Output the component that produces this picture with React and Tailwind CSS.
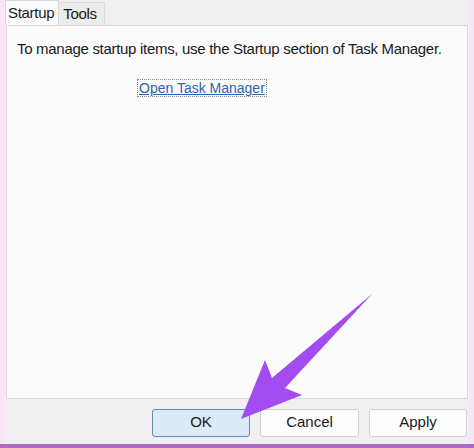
import React from "react";

const FONT = { fontFamily: '"Liberation Sans", Arial, sans-serif' };

function Arrow() {
  return (
    <svg className="absolute left-0 top-0 pointer-events-none" width="474" height="448" viewBox="0 0 474 448">
      <polygon
        points="372,294 272,378 265,360 241,419 302,395 285,388"
        fill="#a34cf2"
        strokeLinejoin="round"
      />
    </svg>
  );
}

export default function App() {
  return (
    <div className="relative w-[474px] h-[448px] bg-[#f8e6f6] overflow-hidden" style={FONT}>
      <div className="absolute inset-0 flex flex-col pl-[5px] pr-[5px] pb-[4px]">
        <div className="flex-1 flex flex-col bg-[#f0f0f0]">
          {/* Tabs */}
          <div className="flex h-[25px] items-end text-[15px] tracking-[-0.3px] text-[#1a1a1a]">
            <div className="h-[25px] pl-[2px] pr-[4px] bg-[#fafafa] border-t border-l border-r border-[#d9d9d9] leading-[23px]">Startup</div>
            <div className="h-[23px] pl-[4px] pr-[7px] bg-[#ececec] border-t border-r border-[#dcdcdc] leading-[21px]">Tools</div>
          </div>
          {/* Panel */}
          <div className="h-[374px] mx-[1px] bg-[#fbfbfb] border border-[#dadada] flex flex-col">
            <p className="pl-[10px] pt-[14px] text-[15px] tracking-[-0.3px] text-[#1a1a1a] leading-[18px]">
              To manage startup items, use the Startup section of Task Manager.
            </p>
            <div className="pl-[130px] pt-[18px]">
              <span className="inline-block border border-dotted border-[#8a8a8a] px-[1px] leading-[16px] text-[14px] text-[#2a66b0] underline">
                Open Task Manager
              </span>
            </div>
          </div>
          {/* Buttons */}
          <div className="flex-1 flex justify-end items-center gap-[10px] pr-[2px] pt-[2px]">
            <button className="w-[98px] h-[28px] rounded-[3px] border border-[#5d8db8] bg-[#dcebf8] text-[15px] text-[#1a1a1a]">OK</button>
            <button className="w-[99px] h-[28px] rounded-[3px] border border-[#cfcfcf] bg-[#fdfdfd] text-[15px] text-[#1a1a1a]">Cancel</button>
            <button className="w-[98px] h-[28px] rounded-[3px] border border-[#cfcfcf] bg-[#fdfdfd] text-[15px] text-[#1a1a1a]">Apply</button>
          </div>
        </div>
      </div>
      <div className="absolute left-0 right-0 bottom-0 h-[4px] bg-[#ad6bc2]" />
      <Arrow />
    </div>
  );
}
